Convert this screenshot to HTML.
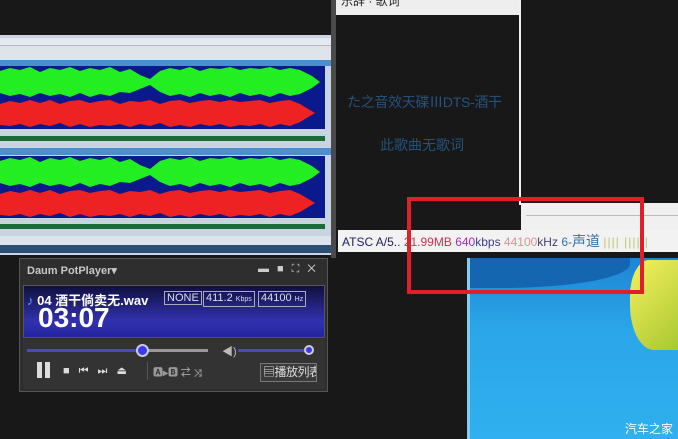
<!DOCTYPE html>
<html><head><meta charset="utf-8"><style>
*{margin:0;padding:0;box-sizing:border-box}
body{width:678px;height:439px;background:#181818;position:relative;overflow:hidden;font-family:"Liberation Sans","Noto Sans CJK SC",sans-serif}
.a{position:absolute}
</style></head><body>
<div class="a" style="left:0;top:35px;width:331px;height:220px;background:#c9d4e2"></div>
<div class="a" style="left:0;top:38px;width:331px;height:8px;background:#e4e9f0;border-bottom:1px solid #b0b8c4"></div>
<div class="a" style="left:0;top:46px;width:331px;height:14px;background:#dfe4ea"></div>
<div class="a" style="left:0;top:60px;width:331px;height:6px;background:#4d8fcc"></div>
<div class="a" style="left:0;top:148px;width:331px;height:7px;background:#4d8fcc"></div>
<svg class="a" style="left:0;top:66px" width="325" height="170">
<rect x="0" y="0" width="325" height="63" fill="#0a1a8c"/>
<rect x="0" y="90" width="325" height="62" fill="#0a1a8c"/>
<g id="w">
<polygon fill="#22ee22" points="0,5 10,2 20,4 30,1 40,6 50,2 60,4 70,1 80,5 90,2 100,4 110,1 120,6 130,3 140,9 150,13 160,5 170,2 180,4 190,1 200,5 210,2 220,3 230,1 240,4 250,2 260,3 270,1 280,4 290,2 300,4 312,10 320,16 312,22 300,28 290,30 280,27 270,31 260,28 250,30 240,27 230,31 220,28 210,30 200,27 190,31 180,28 170,30 160,26 150,19 140,23 130,27 120,26 110,30 100,28 90,31 80,27 70,31 60,28 50,30 40,27 30,31 20,28 10,30 0,27"/>
<polygon fill="#ee2222" points="0,38 10,35 20,37 30,34 40,37 50,34 60,38 70,35 80,34 90,37 100,35 110,34 120,38 130,35 140,36 150,34 160,38 170,35 180,34 190,37 200,35 210,34 220,36 230,34 240,36 250,35 260,34 270,37 280,35 290,34 300,38 315,47 300,56 290,60 280,58 270,61 260,58 250,60 240,59 230,61 220,58 210,60 200,58 190,61 180,59 170,61 160,57 150,60 140,58 130,61 120,58 110,60 100,59 90,61 80,58 70,61 60,57 50,60 40,58 30,61 20,58 10,60 0,59"/>
</g>
<use href="#w" y="90"/>
<rect x="0" y="63" width="325" height="18" fill="#c9d4e2"/>
<rect x="0" y="70" width="325" height="5" fill="#1a6a3a"/>
<rect x="0" y="152" width="325" height="16" fill="#c9d4e2"/>
<rect x="0" y="158" width="325" height="5" fill="#1a6a3a"/>
</svg>
<div class="a" style="left:0;top:236px;width:331px;height:9px;background:#dde3ea"></div>
<div class="a" style="left:0;top:245px;width:331px;height:8px;background:#2c4e74"></div>
<div class="a" style="left:331px;top:0;width:5px;height:258px;background:#4a4a4a"></div>
<div class="a" style="left:336px;top:0;width:185px;height:15px;background:#eeeeee;overflow:hidden"><div style="font-size:12px;line-height:12px;color:#222;margin:-5px 0 0 5px">乐辞 · 歌词</div></div>
<div class="a" style="left:519px;top:0;width:2px;height:205px;background:#f0f0f0"></div>
<div class="a" style="left:347px;top:92px;width:167px;font-size:14px;color:#25527c;white-space:nowrap;overflow:hidden;letter-spacing:-0.3px">た之音效天碟ⅢDTS-酒干</div>
<div class="a" style="left:380px;top:135px;font-size:14px;color:#25527c">此歌曲无歌词</div>
<div class="a" style="left:521px;top:203px;width:157px;height:28px;background:#f0f0f0"></div>
<div class="a" style="left:526px;top:215px;width:152px;height:1px;background:#bbb"></div>
<div class="a" style="left:338px;top:230px;width:340px;height:22px;background:#f2f2f2;font-size:12px;line-height:22px;padding-left:4px;white-space:nowrap"><span style="color:#202060">ATSC A/5..</span> <span style="color:#d03050">21.99MB</span> <span style="color:#c020c0">640</span><span style="color:#404080">kbps</span> <span style="color:#e09090">44100</span><span style="color:#404070">kHz</span> <span style="color:#3070b0">6-<span style="font-size:14px">声道</span></span> <span style="color:#b8c870;letter-spacing:1px">||||  ||||||</span></div>
<div class="a" style="left:467px;top:258px;width:211px;height:181px;background:linear-gradient(180deg,#1e84d4 0,#2ba6e8 40%,#30b0f0 100%);border-left:3px solid #7fd0f0"></div>
<div class="a" style="left:470px;top:258px;width:160px;height:30px;background:#1566b0;border-radius:0 0 80% 0"></div>
<div class="a" style="left:630px;top:260px;width:48px;height:90px;background:linear-gradient(135deg,#f7f060,#a8c830);border-radius:40% 0 0 50%"></div>
<div class="a" style="left:625px;top:420px;font-size:12px;color:#fff">汽车之家</div>
<div class="a" style="left:407px;top:197px;width:237px;height:97px;border:4px solid #e02028"></div>
<div class="a" style="left:19px;top:258px;width:309px;height:134px;background:#2e2e2e;border:1px solid #555"></div>
<div class="a" style="left:27px;top:264px;font-size:11px;font-weight:bold;color:#c8c8c8">Daum PotPlayer▾</div>
<div class="a" style="left:258px;top:263px;font-size:11px;color:#ccc;letter-spacing:8px">▬■⛶✕</div>
<div class="a" style="left:23px;top:285px;width:302px;height:53px;background:linear-gradient(180deg,#101040,#3232b0 70%,#2424a0);border:1px solid #555"></div>
<div class="a" style="left:27px;top:290px;font-size:13px;font-weight:bold;color:#fff;white-space:nowrap"><span style="color:#5af">♪</span> 04 酒干倘卖无.wav</div>
<div class="a" style="left:164px;top:291px;font-size:11px;color:#dde;border:1px solid #aab;padding:0 2px;line-height:12px">NONE</div>
<div class="a" style="left:203px;top:291px;font-size:11px;color:#dde;border:1px solid #aab;padding:0 2px;line-height:12px">411.2 <small style="font-size:7px">Kbps</small></div>
<div class="a" style="left:258px;top:291px;font-size:11px;color:#dde;border:1px solid #aab;padding:0 2px;line-height:12px">44100 <small style="font-size:7px">Hz</small></div>
<div class="a" style="left:38px;top:303px;font-size:28px;line-height:30px;font-weight:bold;color:#fff">03:07</div>
<div class="a" style="left:23px;top:339px;width:302px;height:50px;background:#333"></div>
<div class="a" style="left:27px;top:349px;width:116px;height:3px;background:#4848c8"></div>
<div class="a" style="left:143px;top:349px;width:65px;height:3px;background:#999"></div>
<div class="a" style="left:136px;top:344px;width:13px;height:13px;border-radius:50%;background:#3a3af0;border:2px solid #ccc"></div>
<div class="a" style="left:222px;top:343px;font-size:11px;color:#bbb">◀)</div>
<div class="a" style="left:238px;top:349px;width:70px;height:3px;background:#4848c8"></div>
<div class="a" style="left:304px;top:345px;width:10px;height:10px;border-radius:50%;background:#3a3af0;border:2px solid #ccc"></div>
<div class="a" style="left:37px;top:362px;width:5px;height:16px;background:#ddd"></div>
<div class="a" style="left:45px;top:362px;width:5px;height:16px;background:#ddd"></div>
<div class="a" style="left:63px;top:364px;font-size:11px;color:#ddd;letter-spacing:9px">■⏮⏭⏏</div>
<div class="a" style="left:147px;top:362px;width:1px;height:18px;background:#555"></div>
<div class="a" style="left:153px;top:364px;font-size:10px;color:#999;font-weight:bold">🅰▸🅱 ⇄ ⤨</div>
<div class="a" style="left:260px;top:363px;width:57px;height:19px;border:1px solid #777;background:#3a3a3a;color:#ddd;font-size:12px;line-height:17px;padding-left:2px;white-space:nowrap;overflow:hidden;letter-spacing:-0.5px">▤播放列表</div>
</body></html>
